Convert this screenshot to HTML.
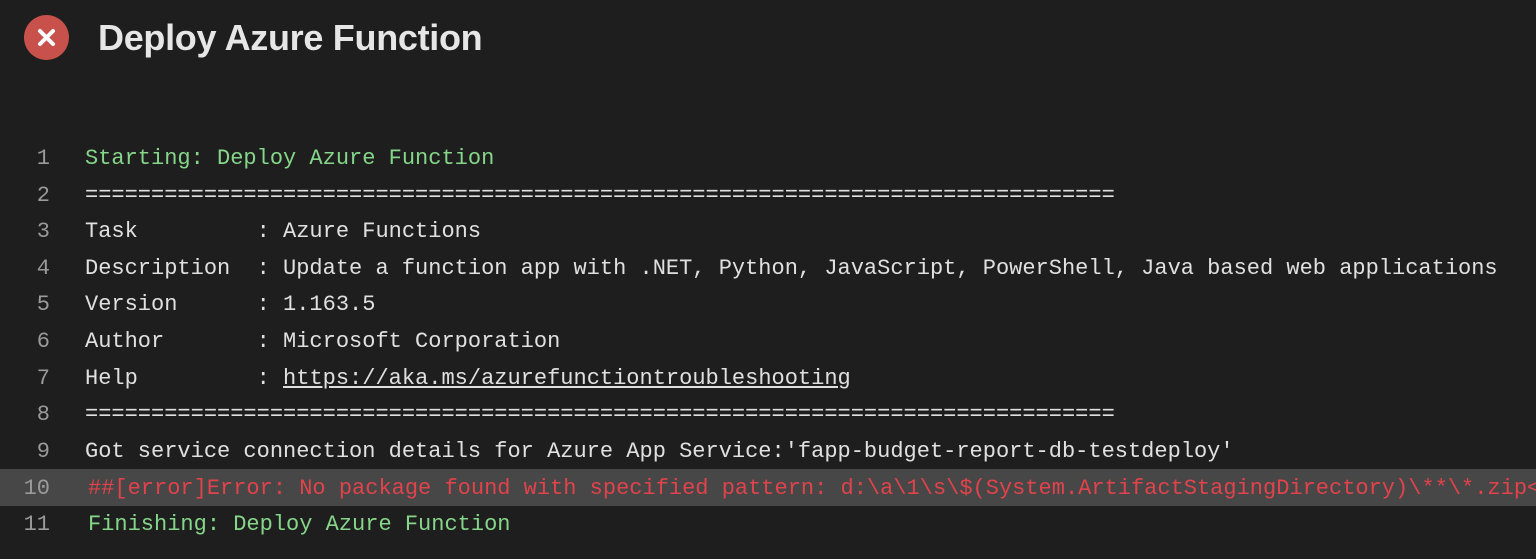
<!DOCTYPE html>
<html><head><meta charset="utf-8"><style>
html,body{margin:0;padding:0;width:1536px;height:559px;overflow:hidden;background:#1e1e1e;}
.title{position:absolute;left:98px;top:17px;font:bold 36px "Liberation Sans",sans-serif;color:#e6e6e6;letter-spacing:-0.3px;}
.ic{position:absolute;left:24px;top:15px;width:45px;height:45px;border-radius:50%;background:#c8524b;}
.line{position:absolute;left:0;width:1536px;height:36.6px;font:22px "Liberation Mono",monospace;line-height:36.6px;white-space:pre;color:#e0e0e0;overflow:hidden;}
.n{position:absolute;left:0;width:50px;text-align:right;color:#9a9a9a;}
.t{position:absolute;left:85px;top:2px;}
.n{top:2px;}
.g{color:#86d68a}.r{color:#e0434b}
.hl{background:#474747;}
a{color:#e0e0e0;text-decoration:underline;}
</style></head><body>
<div class="ic"><svg width="45" height="45" viewBox="0 0 45 45"><path d="M16 16L29 29M29 16L16 29" stroke="#fff" stroke-width="4" stroke-linecap="round"/></svg></div>
<div class="title">Deploy Azure Function</div>
<div class="line" style="top:139px"><span class="n">1</span><span class="t g">Starting: Deploy Azure Function</span></div>
<div class="line" style="top:175.6px"><span class="n">2</span><span class="t">==============================================================================</span></div>
<div class="line" style="top:212.2px"><span class="n">3</span><span class="t">Task         : Azure Functions</span></div>
<div class="line" style="top:248.8px"><span class="n">4</span><span class="t">Description  : Update a function app with .NET, Python, JavaScript, PowerShell, Java based web applications</span></div>
<div class="line" style="top:285.4px"><span class="n">5</span><span class="t">Version      : 1.163.5</span></div>
<div class="line" style="top:322px"><span class="n">6</span><span class="t">Author       : Microsoft Corporation</span></div>
<div class="line" style="top:358.6px"><span class="n">7</span><span class="t">Help         : <a>https://aka.ms/azurefunctiontroubleshooting</a></span></div>
<div class="line" style="top:395.2px"><span class="n">8</span><span class="t">==============================================================================</span></div>
<div class="line" style="top:431.8px"><span class="n">9</span><span class="t">Got service connection details for Azure App Service:'fapp-budget-report-db-testdeploy'</span></div>
<div class="line hl" style="top:469px"><span class="n">10</span><span class="t r" style="left:88px">##[error]Error: No package found with specified pattern: d:\a\1\s\$(System.ArtifactStagingDirectory)\**\*.zip&lt;br&gt;</span></div>
<div class="line" style="top:505px"><span class="n">11</span><span class="t g" style="left:88px">Finishing: Deploy Azure Function</span></div>
</body></html>
